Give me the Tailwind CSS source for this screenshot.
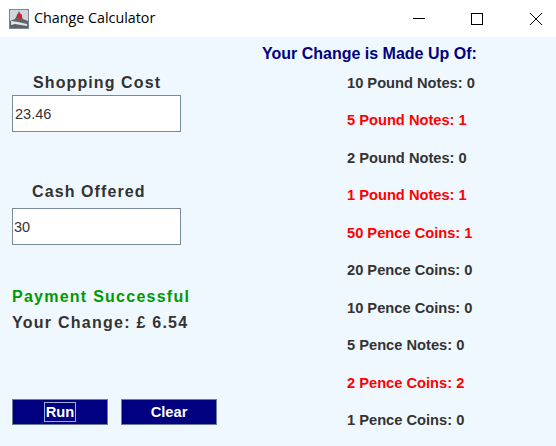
<!DOCTYPE html>
<html lang="en">
<head>
    <meta charset="UTF-8">
    <title>Change Calculator</title>
    <script src="https://cdn.jsdelivr.net/npm/@tailwindcss/browser@4"></script>
</head>
<body class="w-[556px] h-[446px] overflow-hidden bg-[#f0f8ff] font-['Liberation_Sans',Arial,sans-serif]">

    <!-- Title bar -->
    <header class="h-[37px] bg-white flex items-center">
        <svg class="ml-[9px] w-5 h-5" viewBox="0 0 20 20">
            <rect width="20" height="20" fill="#7d8793"/>
            <rect x="1" y="1" width="18" height="18" fill="#cfd6de"/>
            <path d="M1 19 L1 12 L6 10 L10 2 L14 10 L19 12 L19 19 Z" fill="#5f6368"/>
            <path d="M2 12 L9 13 L18 15 L18 17 L6 15 L2 16 Z" fill="#e6e6e6"/>
            <circle cx="10.5" cy="7" r="2.6" fill="#d8202a"/>
        </svg>
        <span class="ml-[5px] text-[14.3px] text-black font-['Open_Sans',sans-serif] leading-none">Change Calculator</span>
        <div class="ml-auto flex items-center">
            <svg class="w-3 h-3" viewBox="0 0 12 12"><path d="M0 5.5 H12" stroke="#000" fill="none"/></svg>
            <svg class="ml-[46px] w-3 h-3" viewBox="0 0 12 12"><rect x="0.5" y="0.5" width="11" height="11" stroke="#000" fill="none"/></svg>
            <svg class="ml-[47px] mr-[14px] w-3 h-3" viewBox="0 0 12 12"><path d="M0 0 L12 12 M12 0 L0 12" stroke="#000" fill="none"/></svg>
        </div>
    </header>

    <main class="flex h-[409px]">
        <!-- Inputs -->
        <section class="w-[262px] pl-3 flex flex-col">
            <label class="mt-[37px] ml-[21px] text-[16px] leading-[18px] font-bold tracking-[1.1px] text-[#333333]">Shopping Cost</label>
            <input type="text" value="23.46" class="mt-[3px] w-[169px] h-[37px] bg-white border border-[#7a8a99] pl-[2px] pt-[1px] text-[14.5px] text-[#333333] outline-none">
            <label class="mt-[51px] ml-[20px] text-[16px] leading-[18px] font-bold tracking-[1.1px] text-[#333333]">Cash Offered</label>
            <input type="text" value="30" class="mt-[7px] w-[169px] h-[37px] bg-white border border-[#7a8a99] pl-[1px] pt-[1px] text-[14.5px] text-[#333333] outline-none">
            <p class="mt-[43px] text-[16px] leading-[18px] font-bold tracking-[1.25px] text-[#009900]">Payment Successful</p>
            <p class="mt-[8px] text-[16px] leading-[18px] font-bold tracking-[1.25px] text-[#333333]">Your Change: £ 6.54</p>
            <div class="mt-[67px] flex gap-[13px]">
                <button class="w-[96px] h-[26px] bg-[#000080] border border-[#6b7f99] text-white text-[14.7px] font-bold flex items-center justify-center"><span class="outline outline-1 outline-[#9fb0d0] px-[1px] leading-[18px]">Run</span></button>
                <button class="w-[96px] h-[26px] bg-[#000080] border border-[#6b7f99] text-white text-[14.7px] font-bold flex items-center justify-center">Clear</button>
            </div>
        </section>

        <!-- Breakdown -->
        <section class="flex-1 flex flex-col">
            <h2 class="mt-[8px] text-[16px] leading-[18px] font-bold text-[#000080]">Your Change is Made Up Of:</h2>
            <ul class="mt-[11.5px] ml-[85px] flex flex-col gap-[21.5px] text-[14.67px] leading-[16px] font-bold text-[#333333]">
                <li>10 Pound Notes: 0</li>
                <li class="text-[#ff0000]">5 Pound Notes: 1</li>
                <li>2 Pound Notes: 0</li>
                <li class="text-[#ff0000]">1 Pound Notes: 1</li>
                <li class="text-[#ff0000]">50 Pence Coins: 1</li>
                <li>20 Pence Coins: 0</li>
                <li>10 Pence Coins: 0</li>
                <li>5 Pence Notes: 0</li>
                <li class="text-[#ff0000]">2 Pence Coins: 2</li>
                <li>1 Pence Coins: 0</li>
            </ul>
        </section>
    </main>
</body>
</html>
